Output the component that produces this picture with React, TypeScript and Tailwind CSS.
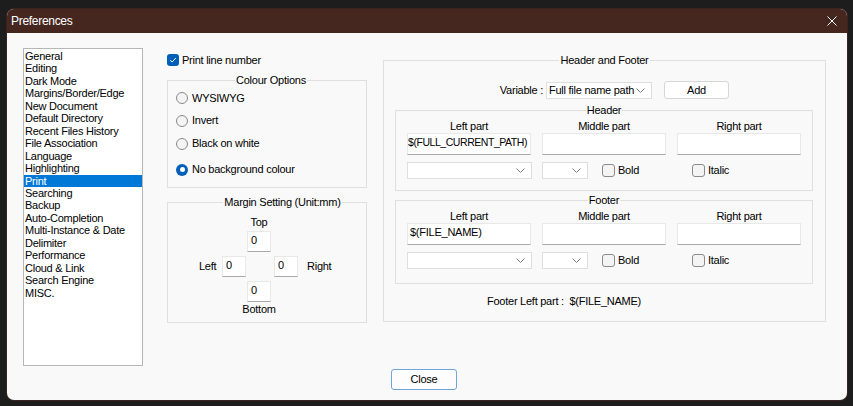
import React from "react";

const items = [
  "General",
  "Editing",
  "Dark Mode",
  "Margins/Border/Edge",
  "New Document",
  "Default Directory",
  "Recent Files History",
  "File Association",
  "Language",
  "Highlighting",
  "Print",
  "Searching",
  "Backup",
  "Auto-Completion",
  "Multi-Instance & Date",
  "Delimiter",
  "Performance",
  "Cloud & Link",
  "Search Engine",
  "MISC.",
];

function Chevron() {
  return (
    <svg width="9" height="5" viewBox="0 0 9 5" className="shrink-0">
      <path d="M0.5 0.5 L4.5 4.5 L8.5 0.5" fill="none" stroke="#7a7a7a" strokeWidth="1" />
    </svg>
  );
}

function Select({ className, text }: { className: string; text?: string }) {
  return (
    <div
      className={
        "h-[17px] bg-white border border-[#dedede] flex items-center pl-[2px] pr-[6px] overflow-hidden " +
        className
      }
    >
      <div className="flex-1 overflow-hidden whitespace-nowrap leading-[13px]">{text}</div>
      <Chevron />
    </div>
  );
}

function Box() {
  return <div className="w-[13px] h-[13px] rounded-[3px] border border-[#8a8a8a] bg-[#f4f4f4] shrink-0" />;
}

function CheckedBox() {
  return (
    <div className="w-[12px] h-[12px] rounded-[3px] bg-[#005fb8] flex items-center justify-center shrink-0">
      <svg width="12" height="12" viewBox="0 0 12 12">
        <path d="M3.2 6.2 L5.1 8 L8.8 4" fill="none" stroke="white" strokeWidth="1" />
      </svg>
    </div>
  );
}

function Radio({ checked }: { checked?: boolean }) {
  if (checked)
    return (
      <div className="w-[12px] h-[12px] rounded-full bg-[#005fb8] flex items-center justify-center shrink-0">
        <div className="w-[5px] h-[5px] rounded-full bg-white" />
      </div>
    );
  return <div className="w-[12px] h-[12px] rounded-full border border-[#8a8a8a] bg-[#f4f4f4] shrink-0" />;
}

function Input({ className, children, end }: { className: string; children?: React.ReactNode; end?: boolean }) {
  return (
    <div
      className={
        "bg-white border border-[#e8e8e8] border-b-[#a9a9a9] overflow-hidden whitespace-nowrap flex leading-[13px] pt-[2px] " +
        (end ? "justify-end pr-[3px] " : "pl-[2px] ") +
        className
      }
    >
      {children}
    </div>
  );
}

function PartsGroup({
  title,
  leftText,
  leftEnd,
  h,
}: {
  title: string;
  leftText: React.ReactNode;
  leftEnd?: boolean;
  h: string;
}) {
  return (
    <fieldset className={"ml-[11px] w-[418px] border border-[#dfdfdf] px-[11px] " + h}>
      <legend className="mx-auto px-[1px] leading-[13px]">{title}</legend>
      <div className="mt-[2px] grid grid-cols-[124px_124px_124px] gap-x-[11px]">
        <div className="h-[14px] leading-[14px] text-center">Left part</div>
        <div className="h-[14px] leading-[14px] text-center">Middle part</div>
        <div className="h-[14px] leading-[14px] text-center">Right part</div>
        <Input className="h-[22px]" end={leftEnd}>
          {leftText}
        </Input>
        <Input className="h-[22px]" />
        <Input className="h-[22px]" />
      </div>
      <div className="mt-[7px] flex items-center h-[17px]">
        <Select className="w-[125px]" />
        <Select className="ml-[10px] w-[46px]" />
        <div className="ml-[14px] w-[90px] flex items-center">
          <Box />
          <span className="ml-[3px] leading-[13px]">Bold</span>
        </div>
        <div className="flex items-center">
          <Box />
          <span className="ml-[3px] leading-[13px]">Italic</span>
        </div>
      </div>
    </fieldset>
  );
}

export default function App() {
  return (
    <div className="w-[853px] h-[406px] bg-[#1d1d1d] overflow-hidden font-['Liberation_Sans',Arial,sans-serif] text-[11px] tracking-[-0.25px] text-black pt-[9px] pl-[7px]">
      <div className="w-[840px] h-[391px] rounded-[7px] overflow-hidden bg-[#f9f9f9] shadow-[0_0_0_1px_#3a2420] flex flex-col">
        {/* Title bar */}
        <div className="h-[24px] bg-[#45271f] flex items-center justify-between pl-[4px] pr-[10px] shrink-0">
          <span className="text-white text-[12px] tracking-[-0.3px] leading-[16px]">Preferences</span>
          <svg width="10" height="10" viewBox="0 0 10 10">
            <path d="M0.5 0.5 L9.5 9.5 M9.5 0.5 L0.5 9.5" stroke="white" strokeWidth="1" fill="none" />
          </svg>
        </div>

        {/* Body */}
        <div className="flex items-start pl-[16px]">
          {/* List box */}
          <div className="mt-[15px] w-[120px] h-[318px] bg-white border border-[#b6b6b6] pt-[1px] overflow-hidden shrink-0">
            {items.map((it) => (
              <div
                key={it}
                className={
                  "h-[12.46px] leading-[12.46px] pl-[1px] whitespace-nowrap " +
                  (it === "Print" ? "bg-[#0078d7] text-white" : "")
                }
              >
                {it}
              </div>
            ))}
          </div>

          {/* Left column */}
          <div className="ml-[24px] mt-[21px] w-[200px] flex flex-col">
            <div className="h-[12px] flex items-center">
              <CheckedBox />
              <span className="ml-[3px] leading-[13px]">Print line number</span>
            </div>

            <fieldset className="mt-[8px] h-[114px] border border-[#dfdfdf] pl-[8px]">
              <legend className="mx-auto px-[1px] leading-[13px]">Colour Options</legend>
              <div className="h-[22px] flex items-center">
                <Radio />
                <span className="ml-[4px] leading-[13px]">WYSIWYG</span>
              </div>
              <div className="h-[23px] flex items-center">
                <Radio />
                <span className="ml-[4px] leading-[13px]">Invert</span>
              </div>
              <div className="h-[23px] flex items-center">
                <Radio />
                <span className="ml-[4px] leading-[13px]">Black on white</span>
              </div>
              <div className="mt-[3px] h-[23px] flex items-center">
                <Radio checked />
                <span className="ml-[4px] leading-[13px]">No background colour</span>
              </div>
            </fieldset>

            <fieldset className="mt-[8px] h-[127px] border border-[#dfdfdf] pl-[31px]">
              <legend className="mx-auto px-[1px] leading-[13px]">Margin Setting (Unit:mm)</legend>
              <div className="mt-[6px] grid grid-cols-[23px_25px_27px_24px_auto] grid-rows-[14px_21px_21px_21px_14px] gap-y-[2px]">
                <div />
                <div />
                <div className="w-[24px] text-center leading-[14px]">Top</div>
                <div />
                <div />

                <div />
                <div />
                <Input className="w-[24px] h-[21px] !pl-[3px]">0</Input>
                <div />
                <div />

                <div className="leading-[21px] mt-[2px]">Left</div>
                <Input className="w-[24px] h-[21px] mt-[2px] !pl-[3px]">0</Input>
                <div />
                <Input className="w-[24px] h-[21px] mt-[2px] !pl-[3px]">0</Input>
                <div className="pl-[9px] leading-[21px] mt-[2px]">Right</div>

                <div />
                <div />
                <Input className="w-[24px] h-[21px] mt-[4px] !pl-[3px]">0</Input>
                <div />
                <div />

                <div />
                <div />
                <div className="w-[24px] flex justify-center leading-[14px] mt-[2px] whitespace-nowrap">Bottom</div>
                <div />
                <div />
              </div>
            </fieldset>
          </div>

          {/* Header and Footer */}
          <fieldset className="ml-[16px] mt-[21px] w-[443px] h-[268px] border border-[#dfdfdf]">
            <legend className="mx-auto px-[1px] leading-[13px]">Header and Footer</legend>
            <div className="mt-[14px] h-[18px] flex items-center">
              <div className="w-[162px] text-right pr-[3px] leading-[13px]">Variable :</div>
              <Select className="w-[106px]" text="Full file name path" />
              <div className="ml-[12px] w-[65px] h-[18px] bg-white border border-[#d6d6d6] rounded-[3px] flex items-center justify-center leading-[13px]">
                Add
              </div>
            </div>
            <div className="mt-[5px]">
              <PartsGroup
                title="Header"
                leftText={<span className="text-[10.5px] tracking-[-0.45px]">$(FULL_CURRENT_PATH)</span>}
                leftEnd
                h="h-[87px]"
              />
            </div>
            <div className="mt-[3px]">
              <PartsGroup title="Footer" leftText="$(FILE_NAME)" h="h-[90px]" />
            </div>
            <div className="mt-[10px] pl-[103px] leading-[14px] whitespace-pre">Footer Left part :  $(FILE_NAME)</div>
          </fieldset>
        </div>

        {/* Close */}
        <div className="mt-[3px] pl-[384px]">
          <div className="w-[66px] h-[21px] bg-[#fdfdfd] border border-[#6ea6dc] rounded-[3px] flex items-center justify-center leading-[13px]">
            Close
          </div>
        </div>
      </div>
    </div>
  );
}
